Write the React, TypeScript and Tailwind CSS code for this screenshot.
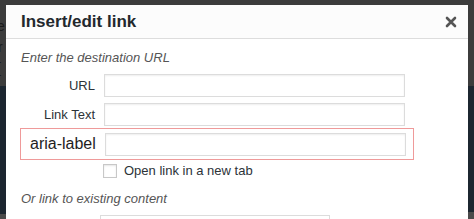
import React from "react";

function Field({ className = "" }: { className?: string }) {
  return (
    <div
      className={`h-[23px] w-[301px] border border-[#dcdcdc] bg-white shadow-[inset_0_1px_2px_rgba(0,0,0,0.07)] ${className}`}
    />
  );
}

export default function App() {
  return (
    <div
      className="flex h-[219px] w-[474px] overflow-hidden bg-[#3c3c3c]"
      style={{ fontFamily: '"Liberation Sans", Arial, sans-serif' }}
    >
      {/* left backdrop strip */}
      <div className="flex w-[6px] shrink-0 flex-col overflow-hidden">
        <div className="flex h-[86px] flex-col pt-[16px] text-[14px] leading-[21px] text-[#1a1a1a]">
          <span className="-ml-[3px]">e</span>
          <span className="-ml-[2px]">r</span>
          <span className="-ml-[3px]">[</span>
        </div>
        <div className="h-[128px] bg-[#1c2630]" />
        <div className="flex-1 bg-[#4a4a4a]" />
      </div>

      {/* dialog */}
      <div className="mt-[5px] flex w-[462px] shrink-0 flex-col bg-white">
        <div className="flex h-[34px] shrink-0 items-center justify-between border-b border-[#dddddd] bg-[#fcfcfc] pl-[15px] pr-[11px]">
          <span className="text-[17px] font-bold leading-none text-[#23282d]">
            Insert/edit link
          </span>
          <svg width="12" height="12" viewBox="0 0 12 12" className="mt-[1px]">
            <path
              d="M2 2 L10 10 M10 2 L2 10"
              stroke="#555"
              strokeWidth="2.6"
              strokeLinecap="round"
            />
          </svg>
        </div>

        <div className="flex flex-col pl-[15px] pt-[11px]">
          <p className="text-[13px] italic leading-[16px] text-[#555]">
            Enter the destination URL
          </p>

          <div className="mt-[8px] flex items-center">
            <span className="w-[74px] text-right text-[13px] text-[#2c3338]">URL</span>
            <Field className="ml-[9px]" />
          </div>

          <div className="mt-[6px] flex items-center">
            <span className="w-[74px] text-right text-[13px] text-[#2c3338]">Link Text</span>
            <Field className="ml-[9px]" />
          </div>

          <div className="-ml-[1px] mt-[2px] flex h-[32px] w-[394px] items-center border border-[#ef9a9a]">
            <span className="ml-[9px] w-[66px] text-[16px] leading-none text-[#1e1e1e]">
              aria-label
            </span>
            <Field className="ml-[9px]" />
          </div>

          <div className="mt-[2px] flex h-[17px] items-center pl-[82px]">
            <div className="h-[14px] w-[14px] border border-[#c8c8c8] bg-white shadow-[inset_0_1px_2px_rgba(0,0,0,0.1)]" />
            <span className="ml-[7px] text-[13px] leading-none text-[#2c3338]">Open link in a new tab</span>
          </div>

          <p className="mt-[12px] text-[13px] italic leading-[16px] text-[#555]">
            Or link to existing content
          </p>

          <div className="ml-[79px] mt-[8px] h-[23px] w-[230px] border border-[#dcdcdc] bg-white" />
        </div>
      </div>

      {/* right backdrop strip */}
      <div className="flex w-[6px] shrink-0 flex-col">
        <div className="h-[86px]" />
        <div className="h-[126px] bg-[#1c2630]" />
        <div className="flex-1 bg-[#4a4a4a]" />
      </div>
    </div>
  );
}
